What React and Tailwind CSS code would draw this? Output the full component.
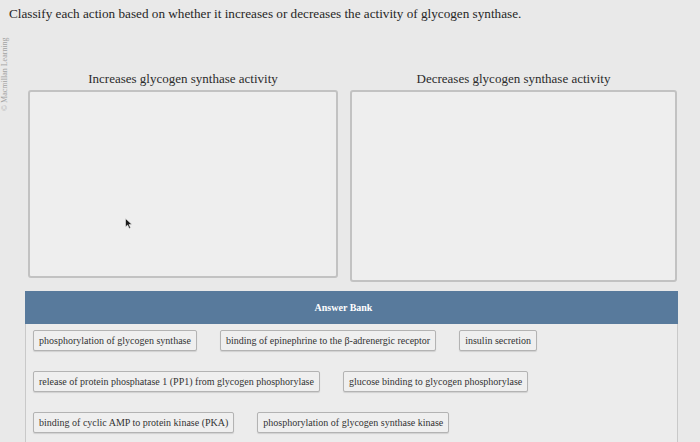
import React from 'react';

const chipRows = [
  ['phosphorylation of glycogen synthase', 'binding of epinephrine to the β-adrenergic receptor', 'insulin secretion'],
  ['release of protein phosphatase 1 (PP1) from glycogen phosphorylase', 'glucose binding to glycogen phosphorylase'],
  ['binding of cyclic AMP to protein kinase (PKA)', 'phosphorylation of glycogen synthase kinase'],
];

function Chip({ label }) {
  return (
    <div className="h-[21px] px-[5px] flex items-center bg-[#efefef] border border-[#b3b3b3] rounded-[2px] shadow-[0_1px_1px_rgba(0,0,0,0.12)] text-[10px] text-[#333] whitespace-nowrap">
      {label}
    </div>
  );
}

function DropZone({ title, className, boxClass }) {
  return (
    <div className={`flex flex-col ${className}`}>
      <div className="h-[16px] text-[13px] leading-[16px] text-center text-[#2b2b2b]">{title}</div>
      <div className={`mt-[3px] bg-[#eeeeee] border-2 border-[#c2c2c2] rounded-[3px] ${boxClass}`} />
    </div>
  );
}

export default function App() {
  return (
    <div className="relative w-[700px] h-[442px] overflow-hidden bg-[#e9e9e9] font-['Liberation_Serif',serif]">
      {/* publisher watermark running up the left edge */}
      <div className="absolute left-[-50px] top-[52px] w-[110px] -rotate-90 text-[8px] leading-[8px] text-[#a3a3a3] whitespace-nowrap">
        © Macmillan Learning
      </div>

      <div className="pl-[9px] pt-[6px] text-[13.2px] leading-[16px] text-[#262626]">
        Classify each action based on whether it increases or decreases the activity of glycogen synthase.
      </div>

      <div className="mt-[49px] pl-[28px] flex gap-[12px] items-start">
        <DropZone title="Increases glycogen synthase activity" className="w-[310px] shrink-0" boxClass="h-[188px]" />
        <DropZone title="Decreases glycogen synthase activity" className="w-[327px] shrink-0" boxClass="h-[192px]" />
      </div>

      {/* mouse pointer resting in the first drop zone */}
      <div className="absolute left-[125px] top-[218px]">
        <svg width="8" height="11" viewBox="0 0 8 11">
          <path d="M0.5 0.5 L0.5 9 L2.6 7.1 L4.2 10.4 L5.6 9.8 L4 6.6 L7 6.6 Z" fill="#1a1a1a" stroke="#eee" strokeWidth="0.6" />
        </svg>
      </div>

      <div className="mt-[9px] ml-[25px] w-[653px]">
        <div className="h-[33px] pr-[16px] bg-[#587a9c] flex items-center justify-center text-[10px] font-bold text-white">
          Answer Bank
        </div>
        <div className="h-[140px] bg-[#ececec] border-x border-[#c9c9c9] pl-[7px] pt-[6px] flex flex-col gap-[20px]">
          {chipRows.map((row, i) => (
            <div key={i} className="flex gap-[23px]">
              {row.map((label) => (
                <Chip key={label} label={label} />
              ))}
            </div>
          ))}
        </div>
      </div>
    </div>
  );
}
